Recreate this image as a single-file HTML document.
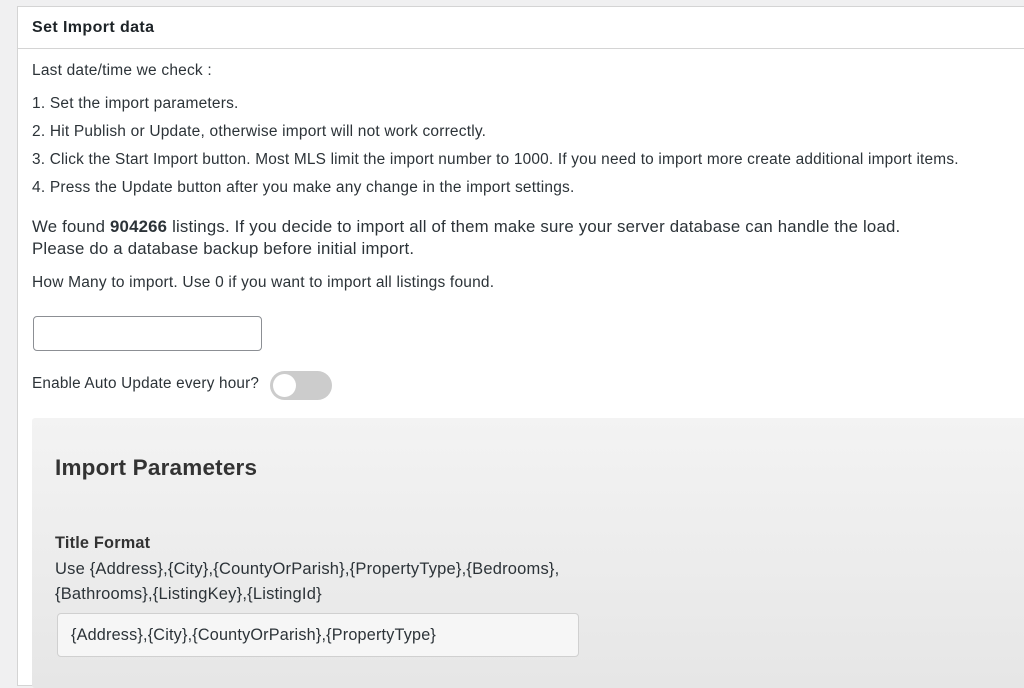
<!DOCTYPE html>
<html><head><meta charset="utf-8"><style>
*{box-sizing:border-box;margin:0;padding:0}
body{width:1024px;height:676px;overflow:hidden;background:#f0f0f1;font-family:"Liberation Sans",Arial,sans-serif;color:#2c3338;position:relative}
.panel{position:absolute;left:17px;top:6px;width:1020px;height:680px;background:#fff;border:1px solid #d4d4d4}
.hdr{height:42px;border-bottom:1px solid #d4d4d4}
.t{position:absolute;white-space:nowrap;font-size:14px;line-height:18px;letter-spacing:0.2px}
.b{font-weight:bold}
.grey{position:absolute;left:32px;top:418px;width:1000px;height:270px;background:linear-gradient(#f3f3f3,#e6e6e6);border-radius:3px}
.inp{position:absolute;background:#fff;border:1px solid #8c8f94;border-radius:4px}
</style></head><body>
<div class="panel"><div class="hdr"></div></div>
<div class="t b" style="left:32px;top:19px;color:#1d2327;font-size:16px;letter-spacing:0.4px">Set Import data</div>
<div class="t" style="left:32px;top:62px;font-size:15.5px">Last date/time we check :</div>
<div class="t" style="left:32px;top:95px;font-size:15.5px">1. Set the import parameters.</div>
<div class="t" style="left:32px;top:123px;font-size:15.5px">2. Hit Publish or Update, otherwise import will not work correctly.</div>
<div class="t" style="left:32px;top:151px;font-size:15.4px">3. Click the Start Import button. Most MLS limit the import number to 1000. If you need to import more create additional import items.</div>
<div class="t" style="left:32px;top:179px;font-size:15.5px">4. Press the Update button after you make any change in the import settings.</div>
<div class="t" style="left:32px;top:218px;font-size:16.8px">We found <b>904266</b> listings. If you decide to import all of them make sure your server database can handle the load.</div>
<div class="t" style="left:32px;top:240px;font-size:16.8px">Please do a database backup before initial import.</div>
<div class="t" style="left:32px;top:274px;font-size:15.5px">How Many to import. Use 0 if you want to import all listings found.</div>
<div class="inp" style="left:33px;top:316px;width:229px;height:35px"></div>
<div class="t" style="left:32px;top:375px;font-size:15.3px">Enable Auto Update every hour?</div>
<div style="position:absolute;left:270px;top:371px;width:62px;height:29px;border-radius:15px;background:#ccc"></div>
<div style="position:absolute;left:273px;top:374px;width:23px;height:23px;border-radius:50%;background:#fff"></div>
<div class="grey"></div>
<div class="t b" style="left:55px;top:455px;font-size:22.5px;line-height:26px;color:#333">Import Parameters</div>
<div class="t b" style="left:55px;top:534px;font-size:16.3px;color:#333">Title Format</div>
<div class="t" style="left:55px;top:560px;font-size:16.5px">Use {Address},{City},{CountyOrParish},{PropertyType},{Bedrooms},</div>
<div class="t" style="left:55px;top:585px;font-size:16.5px">{Bathrooms},{ListingKey},{ListingId}</div>
<div class="inp" style="left:57px;top:613px;width:522px;height:44px;border-color:#d0d0d0;background:#f6f6f6"></div>
<div class="t" style="left:71px;top:626px;font-size:16.2px">{Address},{City},{CountyOrParish},{PropertyType}</div>
</body></html>
